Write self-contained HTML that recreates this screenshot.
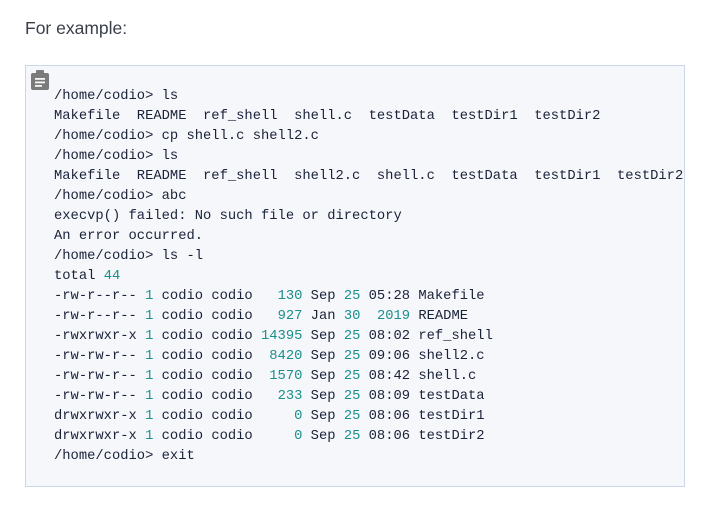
<html><head><style>
body{margin:0;background:#fff;width:725px;height:511px;overflow:hidden}
.p{position:absolute;left:25px;top:18px;font:17.5px "Liberation Sans",sans-serif;color:#3a3f4a}
.box{position:absolute;left:25px;top:65px;width:658px;height:420px;background:#f5f7fb;border:1px solid #ccd6ea;overflow:hidden}
pre{position:absolute;left:28px;top:21px;margin:0;font:13.8px/20px "Liberation Mono",monospace;color:#1a2238}
.n{color:#1b8f8a}
svg{position:absolute;left:5px;top:4px}
</style></head><body>
<div class="p">For example:</div>
<div class="box">
<svg width="18" height="20" viewBox="0 0 18 20"><rect x="0" y="3" width="18" height="17" rx="2" fill="#7a7a7a"/><rect x="5" y="0" width="8" height="5" rx="1" fill="#7a7a7a"/><rect x="4" y="8" width="10" height="1.8" fill="#f5f7fb"/><rect x="4" y="11.5" width="10" height="1.8" fill="#f5f7fb"/><rect x="4" y="15" width="7" height="1.8" fill="#f5f7fb"/></svg>
<pre>/home/codio&gt; ls
Makefile  README  ref_shell  shell.c  testData  testDir1  testDir2
/home/codio&gt; cp shell.c shell2.c
/home/codio&gt; ls
Makefile  README  ref_shell  shell2.c  shell.c  testData  testDir1  testDir2
/home/codio&gt; abc
execvp() failed: No such file or directory
An error occurred.
/home/codio&gt; ls -l
total <span class="n">44</span>
-rw-r--r-- <span class="n">1</span> codio codio   <span class="n">130</span> Sep <span class="n">25</span> 05:28 Makefile
-rw-r--r-- <span class="n">1</span> codio codio   <span class="n">927</span> Jan <span class="n">30</span>  <span class="n">2019</span> README
-rwxrwxr-x <span class="n">1</span> codio codio <span class="n">14395</span> Sep <span class="n">25</span> 08:02 ref_shell
-rw-rw-r-- <span class="n">1</span> codio codio  <span class="n">8420</span> Sep <span class="n">25</span> 09:06 shell2.c
-rw-rw-r-- <span class="n">1</span> codio codio  <span class="n">1570</span> Sep <span class="n">25</span> 08:42 shell.c
-rw-rw-r-- <span class="n">1</span> codio codio   <span class="n">233</span> Sep <span class="n">25</span> 08:09 testData
drwxrwxr-x <span class="n">1</span> codio codio     <span class="n">0</span> Sep <span class="n">25</span> 08:06 testDir1
drwxrwxr-x <span class="n">1</span> codio codio     <span class="n">0</span> Sep <span class="n">25</span> 08:06 testDir2
/home/codio&gt; exit</pre>
</div>
</body></html>
